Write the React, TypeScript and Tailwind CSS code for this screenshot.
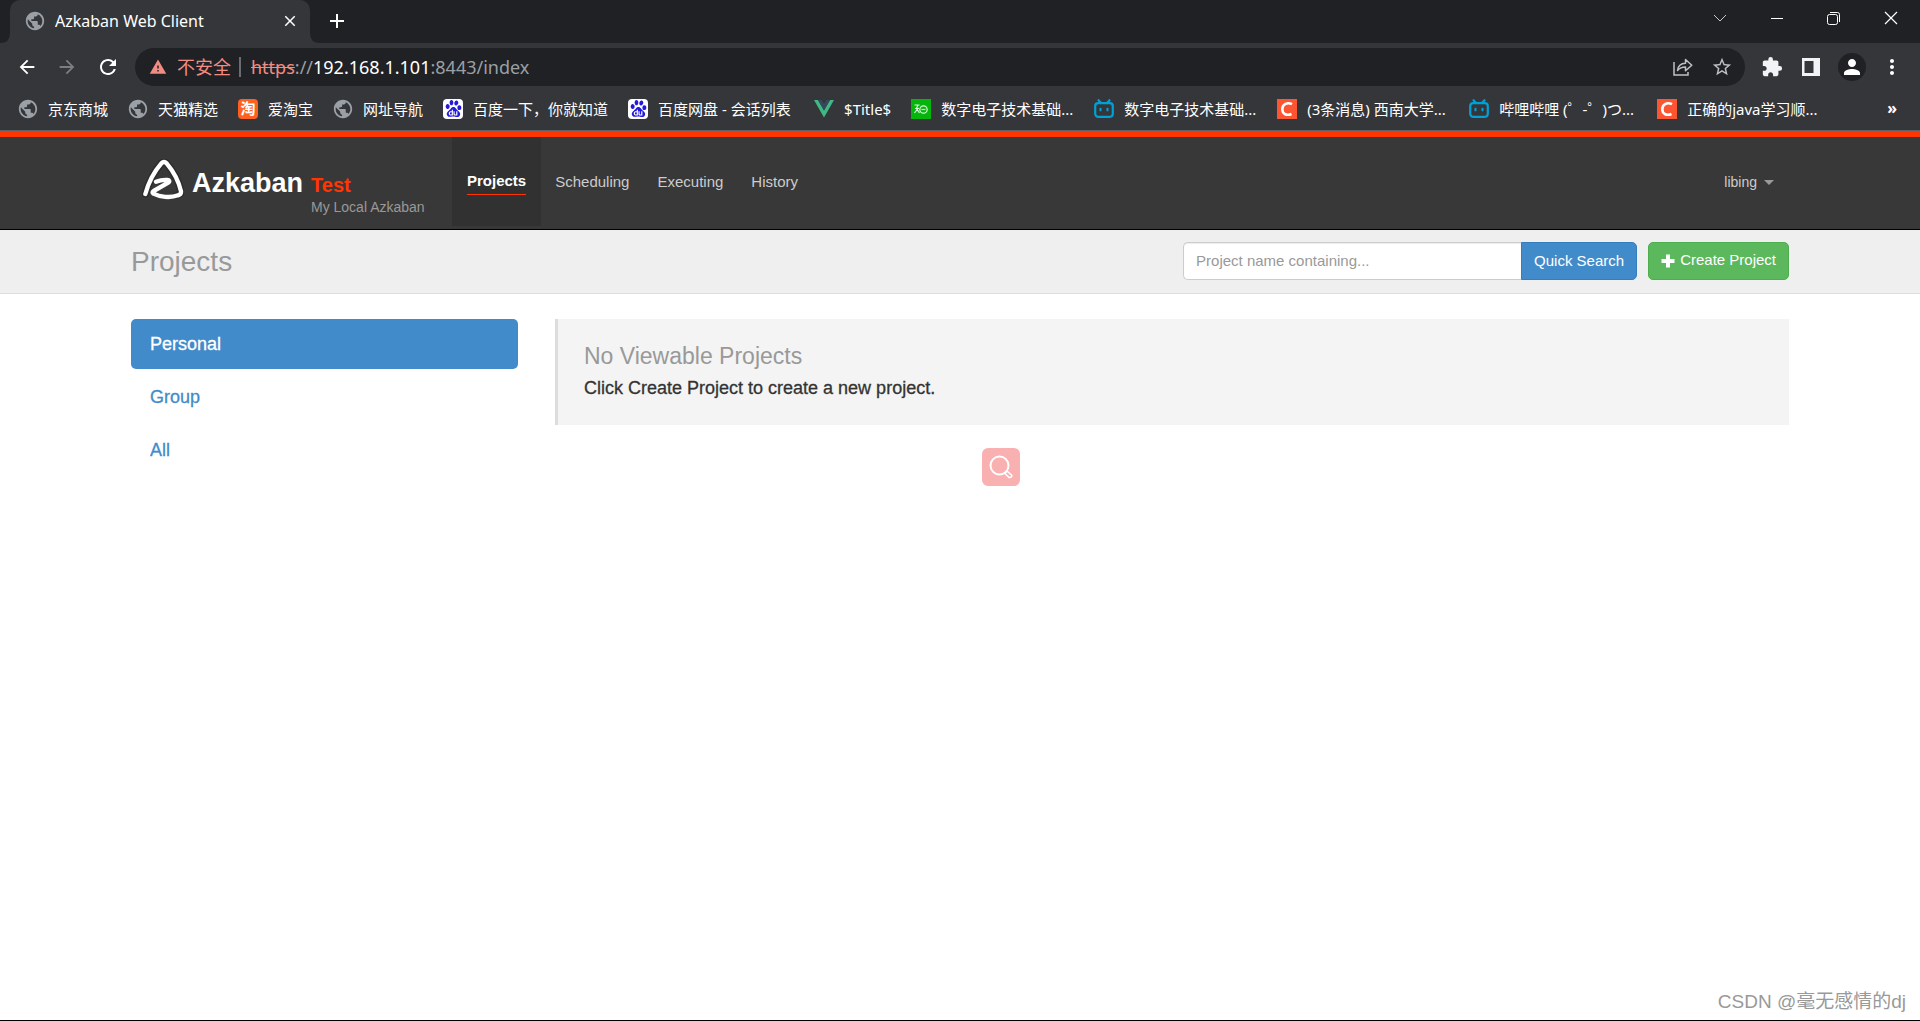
import type { ReactNode } from "react";
import {
  MdArrowBack,
  MdArrowForward,
  MdClose,
  MdExtension,
  MdMoreVert,
  MdPerson,
  MdPublic,
  MdRefresh,
  MdStarBorder,
  MdWarning,
} from "react-icons/md";
import { SiBaidu } from "react-icons/si";

const GlobeIcon = () => <MdPublic size={22} className="-m-px shrink-0 text-[#9aa0a6]" />;

const BaiduIcon = () => (
  <span className="flex size-5 shrink-0 items-center justify-center rounded-sm bg-white">
    <SiBaidu size={17} className="text-[#2319dc]" />
  </span>
);

const TaobaoIcon = () => (
  <span className="flex size-5 shrink-0 items-center justify-center rounded-sm bg-[#ff5f1f] text-[15px] leading-none font-bold text-white">
    淘
  </span>
);

const VueIcon = () => (
  <svg viewBox="0 0 20 20" className="size-5 shrink-0">
    <path d="M0 1h4l6 10.500L16 1h4L10 18.500z" fill="#41b883" />
    <path d="M4 1h3.700L10 5l2.300-4H16l-6 10.500z" fill="#35495e" />
  </svg>
);

const CourseIcon = () => (
  <svg viewBox="0 0 20 20" className="size-5 shrink-0">
    <rect width="20" height="20" fill="#06b50c" />
    <g fill="none" stroke="#d9f7d9" strokeWidth="1.200">
      <path d="M3.500 6h5M4 9.500h4M7 6 5.500 9.500 8.500 14M6.500 10 3.500 14" />
      <circle cx="12.500" cy="10.500" r="3.700" />
      <path d="M10.500 10.500h4" />
    </g>
  </svg>
);

const BilibiliIcon = () => (
  <svg viewBox="0 0 20 20" className="size-5 shrink-0" fill="none" stroke="#00a1d6" strokeLinecap="round">
    <rect x="1.200" y="4.200" width="17.600" height="13.600" rx="3" strokeWidth="2.200" />
    <path d="M4.500 1.200 7 4M15.500 1.200 13 4M6.500 9.800v1.500M13.500 9.800v1.500" strokeWidth="2.200" />
  </svg>
);

const CsdnIcon = () => (
  <svg viewBox="0 0 20 20" className="size-5 shrink-0">
    <rect width="20" height="20" fill="#fc5531" />
    <path d="M15 5.200C10.500 2.800 5.300 5 5.300 10.300c0 5 4.700 6.600 9.200 4.700" fill="none" stroke="#fff" strokeWidth="2.600" />
  </svg>
);

const ShareIcon = () => (
  <svg viewBox="0 0 20 20" className="size-5" fill="none" stroke="#bdc1c6" strokeWidth="1.500">
    <path d="M1 5v13h14v-3" />
    <path d="M4.500 13.500C5 9 8 6.500 12.500 6.300V2.500l6.300 5.800-6.300 5.500V10c-3.500 0-6 1-8 3.500z" strokeLinejoin="round" />
  </svg>
);

const AzkabanLogo = () => (
  <svg viewBox="0 0 126 126" className="size-[42px] shrink-0" fill="none" stroke="#fff" strokeLinecap="round" strokeLinejoin="round">
    <g stroke="#222" strokeWidth="22" opacity="0.500">
      <path d="M10 105C20 68 38 36 58 13q8-8 16 0C96 39 110 66 117 97q1 9-9 11" />
    </g>
    <path d="M10 105C20 68 38 36 58 13q8-8 16 0C96 39 110 66 117 97q1 9-9 12C84 118 54 114 34 104q-5-4 1-8l45-26q5-6-4-7-18-1-34 5" strokeWidth="13" />
  </svg>
);

const bookmarks: { label: string; icon: ReactNode; width?: string }[] = [
  { label: "京东商城", icon: <GlobeIcon /> },
  { label: "天猫精选", icon: <GlobeIcon /> },
  { label: "爱淘宝", icon: <TaobaoIcon /> },
  { label: "网址导航", icon: <GlobeIcon /> },
  { label: "百度一下，你就知道", icon: <BaiduIcon /> },
  { label: "百度网盘 - 会话列表", icon: <BaiduIcon />, width: "min-w-[136px]" },
  { label: "$Title$", icon: <VueIcon /> },
  { label: "数字电子技术基础...", icon: <CourseIcon />, width: "min-w-[133px]" },
  { label: "数字电子技术基础...", icon: <BilibiliIcon />, width: "min-w-[133px]" },
  { label: "(3条消息) 西南大学...", icon: <CsdnIcon />, width: "min-w-[142px]" },
  { label: "哔哩哔哩 (゜-゜)つ...", icon: <BilibiliIcon />, width: "min-w-[138px]" },
  { label: "正确的java学习顺...", icon: <CsdnIcon /> },
];

const TabStrip = () => (
  <div className="flex h-[43px] items-end bg-[#202124]">
    <svg viewBox="0 0 10 10" className="size-2.5 shrink-0">
      <path d="M10 0v10H0Q10 10 10 0z" fill="#35363a" />
    </svg>
    <div className="flex h-full w-[300px] items-center rounded-t-[10px] bg-[#35363a] pr-[11px] pb-0.5 pl-[15px]">
      <GlobeIcon />
      <span className="ml-2.5 flex-1 text-base">Azkaban Web Client</span>
      <button aria-label="Close tab">
        <MdClose size={18} />
      </button>
    </div>
    <svg viewBox="0 0 10 10" className="size-2.5 shrink-0">
      <path d="M0 0v10h10Q0 10 0 0z" fill="#35363a" />
    </svg>
    <button aria-label="New tab" className="ml-2 flex h-full items-center pb-0.5">
      <svg viewBox="0 0 18 18" className="size-[18px]" stroke="#fff" strokeWidth="2">
        <path d="M9 2v14M2 9h14" />
      </svg>
    </button>
    <div className="ml-auto flex h-9 items-center gap-[37px] self-start pr-[19px]">
      <button aria-label="Search tabs">
        <svg viewBox="0 0 20 20" className="size-5" fill="none" stroke="#c8c8c8">
          <path d="m4 7 6 6 6-6" />
        </svg>
      </button>
      <button aria-label="Minimize">
        <svg viewBox="0 0 20 20" className="size-5" stroke="#fff">
          <path d="M4 10.500h12" />
        </svg>
      </button>
      <button aria-label="Restore">
        <svg viewBox="0 0 20 20" className="size-5" fill="none" stroke="#fff">
          <rect x="3.500" y="6.500" width="10" height="10" rx="2" />
          <path d="M6 4.500h7.500q2 0 2 2V14" />
        </svg>
      </button>
      <button aria-label="Close window">
        <svg viewBox="0 0 20 20" className="size-5" stroke="#fff" strokeWidth="1.200">
          <path d="m4 4 12 12M16 4 4 16" />
        </svg>
      </button>
    </div>
  </div>
);

const Toolbar = () => (
  <div className="flex h-12 items-center pl-4">
    <button aria-label="Back">
      <MdArrowBack size={22} />
    </button>
    <button aria-label="Forward" className="ml-[18px] text-[#7d7e81]">
      <MdArrowForward size={22} />
    </button>
    <button aria-label="Reload" className="ml-[18px]">
      <MdRefresh size={24} />
    </button>
    <div className="ml-[15px] flex h-[38px] flex-1 items-center rounded-full bg-[#202124] pr-3 pl-3.5">
      <MdWarning size={18} className="text-[#f28b82]" />
      <span className="ml-2.5 text-lg text-[#f28b82]">不安全</span>
      <span className="mr-2.5 ml-2 h-5 w-0.5 bg-[#6b6c6f]" />
      <span className="text-lg text-[#9aa0a6]">
        <s className="text-[#f28b82]">https</s>://<span className="text-white">192.168.1.101</span>:8443/index
      </span>
      <button aria-label="Share this page" className="ml-auto">
        <ShareIcon />
      </button>
      <button aria-label="Bookmark this page" className="ml-[18px] text-[#bdc1c6]">
        <MdStarBorder size={22} />
      </button>
    </div>
    <div className="flex items-center pr-4 pl-4">
      <button aria-label="Extensions">
        <MdExtension size={22} className="text-[#f1f3f4]" />
      </button>
      <button aria-label="Side panel" className="ml-[19px]">
        <svg viewBox="0 0 18 18" className="size-[18px]">
          <path d="M0 0h18v18H0zM2.500 3v12h9V3z" fill="#f1f3f4" fillRule="evenodd" />
        </svg>
      </button>
      <button aria-label="Profile" className="ml-[18px] flex size-7 items-center justify-center rounded-full bg-[#202124]">
        <MdPerson size={24} />
      </button>
      <button aria-label="Menu" className="ml-3.5">
        <MdMoreVert size={24} />
      </button>
    </div>
  </div>
);

const BookmarkBar = () => (
  <div className="flex h-10 items-center border-b border-[#5f6368] pr-[23px] pb-1 pl-[18px] text-[15px]">
    <nav aria-label="Bookmarks" className="flex gap-5">
      {bookmarks.map((bookmark, index) => (
        <a key={index} href="#" className="flex items-center gap-2.5 leading-5 whitespace-nowrap">
          {bookmark.icon}
          <span className={bookmark.width}>{bookmark.label}</span>
        </a>
      ))}
    </nav>
    <button aria-label="More bookmarks" className="ml-auto pb-0.5 text-base leading-5 font-bold">
      »
    </button>
  </div>
);

const Header = () => (
  <header className="border-t-6 border-b border-t-[#ff3601] border-b-black bg-[#383838]">
    <div className="mx-auto flex h-[92px] max-w-[1658px] items-start">
      <a href="#" className="flex w-[321px] pt-[22px] pl-[11px]">
        <AzkabanLogo />
        <span className="ml-2 pt-[9px]">
          <span className="flex items-baseline gap-2 leading-[30px] font-bold">
            <span className="text-[27px] text-white">Azkaban</span>
            <span className="text-xl leading-[30px] text-[#ff3601]">Test</span>
          </span>
          <span className="block pl-[119px] text-sm leading-3.5 whitespace-nowrap text-[#999]">My Local Azkaban</span>
        </span>
      </a>
      <nav className="flex text-[15px] leading-5 text-[#ccc]">
        <a href="#" className="h-[89px] bg-[#313131] px-[15px] pt-[34px] font-bold text-white">
          <span className="block border-b border-[#ff3601] pb-[3px]">Projects</span>
        </a>
        <a href="#" className="px-3.5 pt-[35px]">Scheduling</a>
        <a href="#" className="px-3.5 pt-[35px]">Executing</a>
        <a href="#" className="px-3.5 pt-[35px]">History</a>
      </nav>
      <button className="mt-[35px] ml-auto flex items-center gap-[7px] pr-[15px] text-sm text-[#ccc]">
        libing
        <span className="border-x-5 border-t-5 border-x-transparent border-t-[#999]" />
      </button>
    </div>
  </header>
);

const TitleBar = () => (
  <div className="border-b border-[#ddd] bg-[#efefef]">
    <div className="mx-auto flex h-[63px] max-w-[1658px] items-center pb-0.5">
      <h1 className="pt-0.5 text-[28px] leading-8 text-[#999]">Projects</h1>
      <form className="ml-auto flex text-[15px] leading-6" onSubmit={(e) => e.preventDefault()}>
        <input
          type="text"
          aria-label="Project name"
          placeholder="Project name containing..."
          className="h-[38px] w-[338px] rounded-l-[5px] border border-r-0 border-[#ccc] bg-white px-3 shadow-[inset_0_1px_1px_rgba(0,0,0,0.075)] placeholder:text-[#999]"
        />
        <button type="submit" className="h-[38px] rounded-r-[5px] border border-[#357ebd] bg-[#428bca] px-3 text-white">
          Quick Search
        </button>
      </form>
      <button className="ml-[11px] flex h-[38px] items-center gap-[5px] rounded-[5px] border border-[#4cae4c] bg-[#5cb85c] px-3 text-[15px] text-white">
        <svg viewBox="0 0 14 14" className="size-3.5" fill="#fff">
          <path d="M5 .500h4V5h4.500v4H9v4.500H5V9H.500V5H5z" />
        </svg>
        Create Project
      </button>
    </div>
  </div>
);

const Content = () => (
  <main className="mx-auto flex w-full max-w-[1658px] flex-1 items-start gap-[37px] pt-[25px] text-lg [-webkit-text-stroke:0.300px]">
    <nav className="flex w-[387px] shrink-0 flex-col gap-[3px] leading-[26px] text-[#428bca]">
      <a href="#" className="rounded-[5px] bg-[#428bca] px-[19px] py-3 text-white">Personal</a>
      <a href="#" className="rounded-[5px] px-[19px] py-3">Group</a>
      <a href="#" className="rounded-[5px] px-[19px] py-3">All</a>
    </nav>
    <section className="flex-1 border-l-3 border-[#ddd] bg-[#f4f4f4] px-[26px] pt-[23px] pb-[23px] text-[#333]">
      <h4 className="text-[23px] leading-7 text-[#999] [-webkit-text-stroke:0]">No Viewable Projects</h4>
      <p className="pt-[5px] leading-[27px]">Click Create Project to create a new project.</p>
    </section>
  </main>
);

export default function App() {
  return (
    <div className="relative flex min-h-screen flex-col border-b border-black bg-white font-['Liberation_Sans',Arial,sans-serif]">
      <div className="bg-[#35363a] font-['Noto_Sans','Noto_Sans_CJK_SC',sans-serif] text-white">
        <TabStrip />
        <Toolbar />
        <BookmarkBar />
      </div>
      <Header />
      <TitleBar />
      <Content />
      <button
        aria-label="Search image"
        className="absolute top-[448px] left-[982px] flex size-[38px] items-center justify-center rounded-md bg-[#f9b0b1]"
      >
        <svg viewBox="0 0 24 24" className="size-6" fill="none" stroke="#fff" strokeWidth="2">
          <circle cx="10.500" cy="10.500" r="9" />
          <path d="m16.500 17.500 1.500-1.500 4.500 4q1 2-1.500 2.500h-1l-4-4z" strokeWidth="1.600" strokeLinejoin="round" />
        </svg>
      </button>
      <p className="pr-3.5 pb-1 text-right font-['Liberation_Sans','Noto_Sans_CJK_SC',sans-serif] text-[19px] text-[#999]">
        CSDN @毫无感情的dj
      </p>
    </div>
  );
}
